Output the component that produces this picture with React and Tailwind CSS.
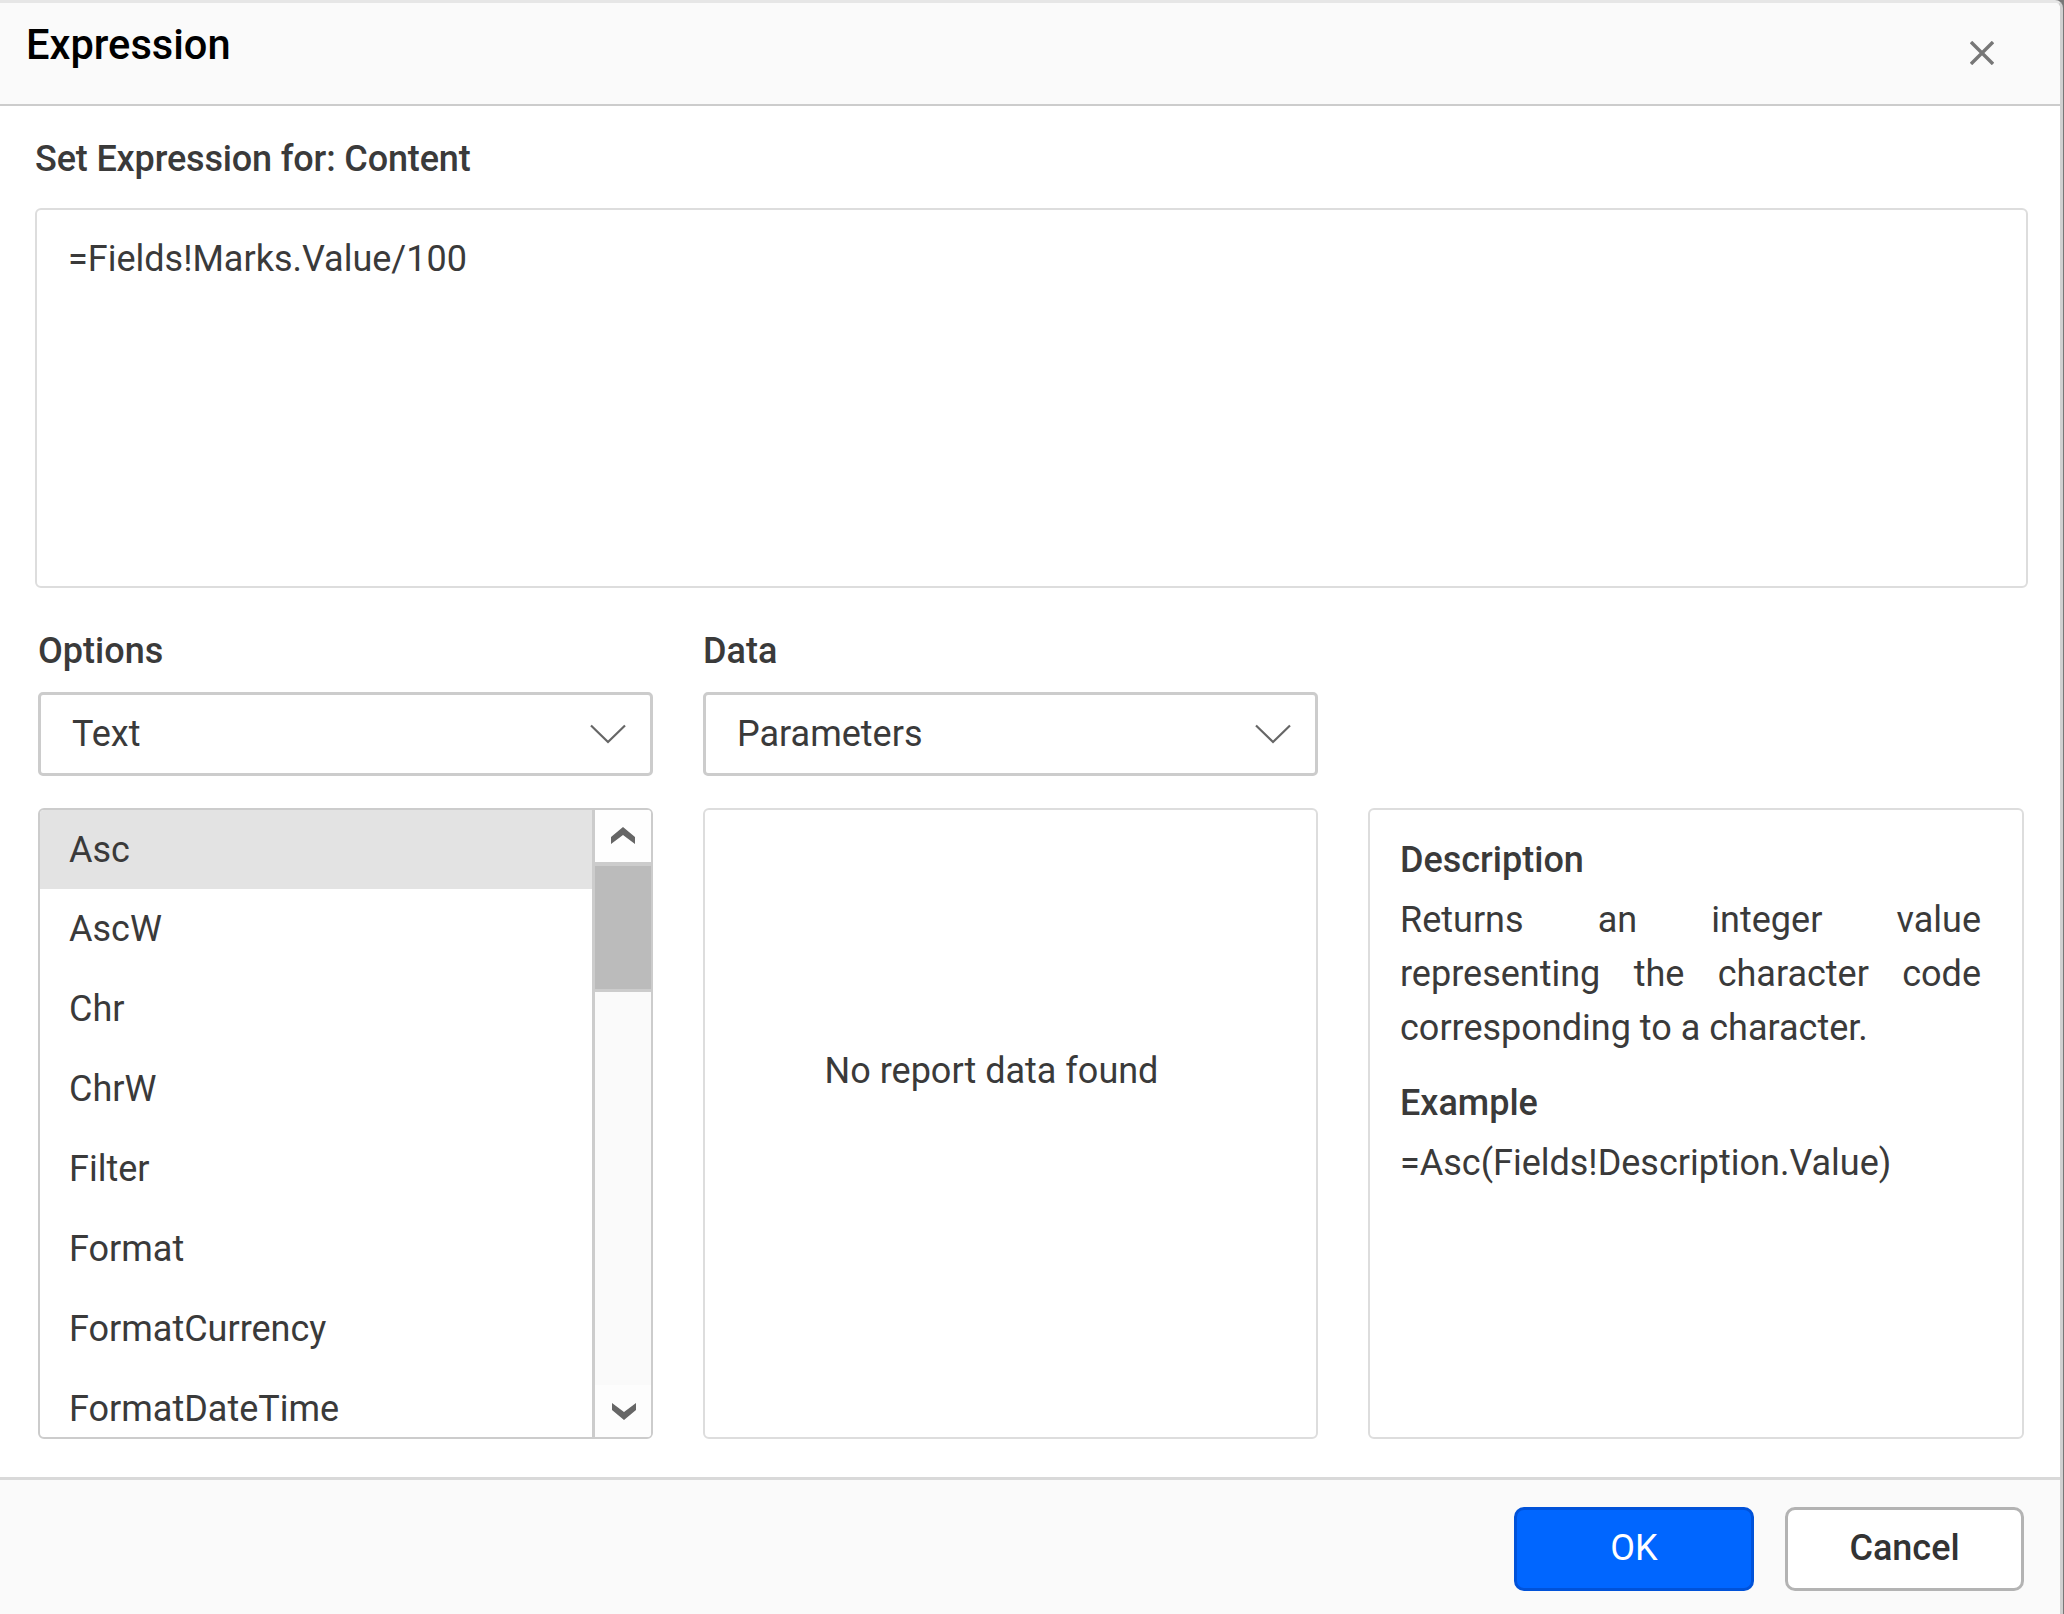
const functions = ["Asc", "AscW", "Chr", "ChrW", "Filter", "Format", "FormatCurrency", "FormatDateTime"];

function Chevron() {
  return (
    <svg width="36" height="20" viewBox="0 0 36 20" fill="none" stroke="#666" strokeWidth="2.2">
      <path d="M1 1.5 L18 18 L35 1.5" />
    </svg>
  );
}

function Select({ value }) {
  return (
    <div className="flex h-[84px] w-[615px] items-center justify-between rounded-[5px] border-[3px] border-[#ccc] bg-white pl-[31px] pr-[24px] text-[#3a3a3a]">
      <span className="pb-px">{value}</span>
      <Chevron />
    </div>
  );
}

function ScrollArrow({ down }) {
  return (
    <svg width="24" height="18" viewBox="0 0 24 18" fill="#666">
      {down ? <path d="M0 1 L12 10 L24 1 L24 8 L12 18 L0 8 Z" /> : <path d="M12 0 L24 10 L24 17 L12 8 L0 17 L0 10 Z" />}
    </svg>
  );
}

export default function App() {
  return (
    <div className="h-[1614px] w-[2064px] bg-[#777] pr-px">
      <div className="flex h-full flex-col overflow-hidden rounded-tr-lg border-t-[3px] border-r-[3px] border-[#e6e6e6] border-r-[#d0d0d0] bg-white font-['Roboto',sans-serif] text-[36px] text-[#3a3a3a]">
        {/* header */}
        <div className="flex h-[103px] shrink-0 items-start justify-between border-b-2 border-[#ccc] bg-[#fafafa] pl-[26px] pr-[66px]">
          <div className="pt-[14px] text-[41.6px] leading-[56px] font-medium text-black">Expression</div>
          <svg className="mt-[38px]" width="24" height="24" viewBox="0 0 24 24" stroke="#777" strokeWidth="3.4">
            <path d="M1 1 L23 23 M23 1 L1 23" />
          </svg>
        </div>

        {/* body */}
        <div className="flex flex-1 flex-col pl-[35px]">
          <div className="pt-[28px] text-[36px] leading-[50px] font-medium tracking-[-0.15px]">Set Expression for: Content</div>
          <div className="mt-[24px] h-[380px] w-[1993px] rounded-[6px] border-2 border-[#ddd] pl-[31px] pt-[25px] leading-[48px]">
            =Fields!Marks.Value/100
          </div>

          <div className="mt-[38px] flex gap-[50px] pl-[3px] leading-[50px] font-medium">
            <div className="w-[615px]">Options</div>
            <div className="w-[615px]">Data</div>
          </div>
          <div className="mt-[16px] flex gap-[50px] pl-[3px]">
            <Select value="Text" />
            <Select value="Parameters" />
          </div>

          <div className="mt-[32px] flex h-[631px] gap-[50px] pl-[3px]">
            <div className="flex w-[615px] overflow-hidden rounded-[6px] border-2 border-[#ccc]">
              <div className="flex-1 overflow-hidden">
                {functions.map((name, i) => (
                  <div key={name} className={`flex items-center pl-[29px] ${i === 0 ? "h-[79px] bg-[#e3e3e3]" : "h-[80px]"}`}>
                    {name}
                  </div>
                ))}
              </div>
              <div className="flex w-[59px] shrink-0 flex-col border-l-[3px] border-[#ccc] bg-[#fafafa]">
                <div className="flex h-[52px] shrink-0 items-center justify-center bg-[#fefefe]">
                  <ScrollArrow />
                </div>
                <div className="h-[130px] shrink-0 border-t-4 border-b-[3px] border-[#ccc] bg-[#bbb]"></div>
                <div className="flex-1"></div>
                <div className="flex h-[52px] shrink-0 items-center justify-center bg-[#fdfdfd] pl-[2px]">
                  <ScrollArrow down />
                </div>
              </div>
            </div>

            <div className="flex w-[615px] items-center justify-center rounded-[6px] border-2 border-[#ddd] pr-[38px] pb-[105px]">
              No report data found
            </div>

            <div className="w-[656px] rounded-[6px] border-2 border-[#ddd] pl-[30px] pr-[41px] pt-[26px]">
              <div className="leading-[48px] font-medium">Description</div>
              <div className="mt-[9px] text-justify leading-[54px]">
                Returns an integer value representing the character code corresponding to a character.
              </div>
              <div className="mt-[24px] leading-[48px] font-medium">Example</div>
              <div className="mt-[12px] leading-[48px]">=Asc(Fields!Description.Value)</div>
            </div>
          </div>
        </div>

        {/* footer */}
        <div className="flex h-[137px] shrink-0 items-start justify-end gap-[31px] border-t-[3px] border-[#d9d9d9] bg-[#fafafa] pr-[36px] pt-[27px]">
          <button className="h-[84px] w-[240px] rounded-[10px] border-[3px] border-[#0052d9] bg-[#0066ff] pb-[2px] text-white">OK</button>
          <button className="h-[84px] w-[239px] rounded-[10px] border-[3px] border-[#b3b3b3] bg-white pb-[2px] font-medium text-[#333]">Cancel</button>
        </div>
      </div>
    </div>
  );
}
